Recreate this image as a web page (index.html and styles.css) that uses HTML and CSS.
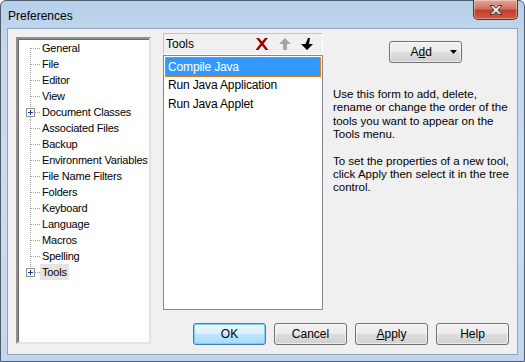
FILE: index.html
```html
<!DOCTYPE html>
<html>
<head>
<meta charset="utf-8">
<link rel="stylesheet" href="styles.css">
</head>
<body>
<div class="window">
  <div class="titlebar">
    <span class="title">Preferences</span>
    <div class="close">
      <svg width="18" height="12" viewBox="0 0 18 12">
        <path d="M3 1.5 L6 1.5 L9 4.3 L12 1.5 L15 1.5 L10.8 6 L15 10.5 L12 10.5 L9 7.7 L6 10.5 L3 10.5 L7.2 6 Z" fill="#ffffff" stroke="#3b3b3b" stroke-width="1" stroke-linejoin="round"/>
      </svg>
    </div>
  </div>
  <div class="client">
    <div class="tree">
      <div class="row"><svg class="conn" width="22" height="16"><line x1="12.5" y1="8" x2="12.5" y2="16" class="dl"/><line x1="13" y1="8.5" x2="22" y2="8.5" class="dl"/></svg><span class="lbl">General</span></div>
      <div class="row"><svg class="conn" width="22" height="16"><line x1="12.5" y1="0" x2="12.5" y2="16" class="dl"/><line x1="13" y1="8.5" x2="22" y2="8.5" class="dl"/></svg><span class="lbl">File</span></div>
      <div class="row"><svg class="conn" width="22" height="16"><line x1="12.5" y1="0" x2="12.5" y2="16" class="dl"/><line x1="13" y1="8.5" x2="22" y2="8.5" class="dl"/></svg><span class="lbl">Editor</span></div>
      <div class="row"><svg class="conn" width="22" height="16"><line x1="12.5" y1="0" x2="12.5" y2="16" class="dl"/><line x1="13" y1="8.5" x2="22" y2="8.5" class="dl"/></svg><span class="lbl">View</span></div>
      <div class="row"><svg class="conn" width="22" height="16"><line x1="12.5" y1="0" x2="12.5" y2="4" class="dl"/><line x1="12.5" y1="13" x2="12.5" y2="16" class="dl"/><line x1="17" y1="8.5" x2="22" y2="8.5" class="dl"/><rect x="8.5" y="4.5" width="8" height="8" class="pbox"/><line x1="10" y1="8.5" x2="15" y2="8.5" class="pl"/><line x1="12.5" y1="6" x2="12.5" y2="11" class="pl"/></svg><span class="lbl">Document Classes</span></div>
      <div class="row"><svg class="conn" width="22" height="16"><line x1="12.5" y1="0" x2="12.5" y2="16" class="dl"/><line x1="13" y1="8.5" x2="22" y2="8.5" class="dl"/></svg><span class="lbl">Associated Files</span></div>
      <div class="row"><svg class="conn" width="22" height="16"><line x1="12.5" y1="0" x2="12.5" y2="16" class="dl"/><line x1="13" y1="8.5" x2="22" y2="8.5" class="dl"/></svg><span class="lbl">Backup</span></div>
      <div class="row"><svg class="conn" width="22" height="16"><line x1="12.5" y1="0" x2="12.5" y2="16" class="dl"/><line x1="13" y1="8.5" x2="22" y2="8.5" class="dl"/></svg><span class="lbl">Environment Variables</span></div>
      <div class="row"><svg class="conn" width="22" height="16"><line x1="12.5" y1="0" x2="12.5" y2="16" class="dl"/><line x1="13" y1="8.5" x2="22" y2="8.5" class="dl"/></svg><span class="lbl">File Name Filters</span></div>
      <div class="row"><svg class="conn" width="22" height="16"><line x1="12.5" y1="0" x2="12.5" y2="16" class="dl"/><line x1="13" y1="8.5" x2="22" y2="8.5" class="dl"/></svg><span class="lbl">Folders</span></div>
      <div class="row"><svg class="conn" width="22" height="16"><line x1="12.5" y1="0" x2="12.5" y2="16" class="dl"/><line x1="13" y1="8.5" x2="22" y2="8.5" class="dl"/></svg><span class="lbl">Keyboard</span></div>
      <div class="row"><svg class="conn" width="22" height="16"><line x1="12.5" y1="0" x2="12.5" y2="16" class="dl"/><line x1="13" y1="8.5" x2="22" y2="8.5" class="dl"/></svg><span class="lbl">Language</span></div>
      <div class="row"><svg class="conn" width="22" height="16"><line x1="12.5" y1="0" x2="12.5" y2="16" class="dl"/><line x1="13" y1="8.5" x2="22" y2="8.5" class="dl"/></svg><span class="lbl">Macros</span></div>
      <div class="row"><svg class="conn" width="22" height="16"><line x1="12.5" y1="0" x2="12.5" y2="16" class="dl"/><line x1="13" y1="8.5" x2="22" y2="8.5" class="dl"/></svg><span class="lbl">Spelling</span></div>
      <div class="row"><svg class="conn" width="22" height="16"><line x1="12.5" y1="0" x2="12.5" y2="4" class="dl"/><line x1="17" y1="8.5" x2="22" y2="8.5" class="dl"/><rect x="8.5" y="4.5" width="8" height="8" class="pbox"/><line x1="10" y1="8.5" x2="15" y2="8.5" class="pl"/><line x1="12.5" y1="6" x2="12.5" y2="11" class="pl"/></svg><span class="lbl sel">Tools</span></div>
    </div>
    <div class="main">
      <div class="top">
        <div class="tools">
          <div class="tools-head">
            <span class="th-title">Tools</span>
            <span class="th-icons">
              <svg width="16" height="14" viewBox="0 0 16 14"><path d="M2 1 L5 1 L8 4.5 L11 1 L14 1 L9.6 6.5 L14.5 13 L11.5 13 L8 8.5 L4.5 13 L1.5 13 L6.4 6.5 Z" fill="#a00000"/></svg>
              <svg width="14" height="14" viewBox="0 0 14 14"><path d="M7 1 L13 7 L9 7 L9 13 L5 13 L5 7 L1 7 Z" fill="#a6a6a6"/></svg>
              <svg width="14" height="14" viewBox="0 0 14 14"><path d="M8 1 L10 1 L9 7 L13 7 L7 13 L1 7 L5.5 7 Z" fill="#000000"/></svg>
            </span>
          </div>
          <div class="tools-list">
            <div class="item selected">Compile Java</div>
            <div class="item">Run Java Application</div>
            <div class="item">Run Java Applet</div>
          </div>
        </div>
        <div class="info">
          <div class="add-wrap">
            <div class="btn add"><span>A<u>d</u>d</span><svg width="8" height="4" viewBox="0 0 8 4"><path d="M0 0 L7 0 L3.5 4 Z" fill="#000"/></svg></div>
          </div>
          <p class="para">Use this form to add, delete, rename or change the order of the tools you want to appear on the Tools menu.</p>
          <p class="para">To set the properties of a new tool, click Apply then select it in the tree control.</p>
        </div>
      </div>
      <div class="buttons">
        <div class="btn default">OK</div>
        <div class="btn">Cancel</div>
        <div class="btn"><span><u>A</u>pply</span></div>
        <div class="btn">Help</div>
      </div>
    </div>
  </div>
</div>
</body>
</html>
```

FILE: styles.css
```css
* { box-sizing: border-box; }
html, body {
  margin: 0;
  padding: 0;
  width: 525px;
  height: 362px;
  overflow: hidden;
  background: #ffffff;
}
.window {
  width: 525px;
  height: 362px;
  background: linear-gradient(180deg, #b6cfe9 0px, #c3d8ee 40px, #cadcf0 200px, #c2d7ed 362px);
  border: 1px solid #4f5c6c;
  border-radius: 6px 6px 0 0;
  display: flex;
  flex-direction: column;
  font-family: "Liberation Sans", Arial, sans-serif;
  font-size: 11px;
  color: #000;
}
.titlebar {
  height: 27px;
  display: flex;
  align-items: flex-start;
  justify-content: space-between;
  padding-left: 7px;
  padding-right: 6px;
}
.title {
  font-size: 12px;
  margin-top: 8px;
  color: #000;
}
.close {
  width: 45px;
  height: 20px;
  margin-top: -1px;
  border: 1px solid #6e2a22;
  border-top: none;
  border-radius: 0 0 5px 5px;
  background: linear-gradient(180deg, #e3a79c 0%, #d3705f 45%, #c0412b 55%, #d25a3f 100%);
  display: flex;
  align-items: center;
  justify-content: center;
  box-shadow: inset 0 0 0 1px rgba(255,255,255,0.35);
}
.client {
  flex: 1;
  margin: 0 6px 6px 6px;
  background: #f0f0f0;
  border: 1px solid #8ca5c3;
  display: flex;
  align-items: flex-start;
}
.tree {
  width: 135px;
  height: 307px;
  margin: 8px 0 0 8px;
  background: #fff;
  border-style: solid;
  border-width: 2px;
  border-color: #8f8f8f #e3e3e3 #e3e3e3 #8f8f8f;
  box-shadow: inset 1px 1px 0 #696969;
  padding-top: 1px;
}
.row {
  height: 16px;
  display: flex;
  align-items: center;
}
.conn {
  flex: none;
  width: 22px;
  height: 16px;
  display: block;
}
.dl {
  stroke: #a0a0a0;
  stroke-width: 1;
  stroke-dasharray: 1 1;
  shape-rendering: crispEdges;
}
.pbox {
  fill: #fbfbfb;
  stroke: #919191;
  stroke-width: 1;
  shape-rendering: crispEdges;
}
.pl {
  stroke: #1f3f83;
  stroke-width: 1;
  shape-rendering: crispEdges;
}
.lbl {
  padding: 1px 2px;
  line-height: 14px;
  white-space: nowrap;
  letter-spacing: -0.2px;
}
.lbl.sel {
  background: #e4e4e4;
}
.main {
  margin-left: 12px;
  margin-top: 4px;
  flex: 1;
  display: flex;
  flex-direction: column;
}
.top {
  display: flex;
  align-items: flex-start;
}
.tools {
  width: 160px;
  height: 277px;
  display: flex;
  flex-direction: column;
}
.tools-head {
  height: 22px;
  border: 1px solid #c5c5c5;
  border-right-color: #ffffff;
  border-bottom-color: #ffffff;
  display: flex;
  align-items: center;
  justify-content: space-between;
  padding: 0 8px 0 2px;
}
.th-title {
  font-size: 12px;
}
.th-icons {
  display: flex;
  gap: 8px;
  align-items: center;
}
.th-icons svg { display: block; }
.tools-list {
  flex: 1;
  background: #fff;
  border: 1px solid #828790;
  padding: 1px;
}
.item {
  height: 19px;
  line-height: 19px;
  padding-left: 3px;
  font-size: 12px;
  white-space: nowrap;
  letter-spacing: -0.15px;
}
.item.selected {
  background: #3399ff;
  color: #fff;
  outline: 1px dotted #e48a2c;
  outline-offset: -1px;
  height: 20px;
  line-height: 20px;
  margin-bottom: -1px;
}
.info {
  margin-left: 10px;
  flex: 1;
  display: flex;
  flex-direction: column;
}
.add-wrap {
  display: flex;
  justify-content: center;
  padding-top: 8px;
  padding-right: 0px;
}
.btn {
  width: 73px;
  height: 22px;
  border: 1px solid #707070;
  border-radius: 3px;
  background: linear-gradient(180deg, #f2f2f2 0%, #ebebeb 48%, #dddddd 52%, #cfcfcf 100%);
  box-shadow: inset 0 0 0 1px rgba(255,255,255,0.6);
  display: flex;
  align-items: center;
  justify-content: center;
  font-size: 12px;
}
.btn.add {
  justify-content: flex-start;
  padding-left: 21px;
}
.btn.add svg {
  margin-left: 18px;
}
.btn.default {
  border-color: #3c7fb1;
  background: linear-gradient(180deg, #eaf6fd 0%, #d9f0fc 48%, #bee6fd 52%, #a7d9f5 100%);
  box-shadow: inset 0 0 0 1px #7ed0f4;
}
.para {
  margin: 0;
  line-height: 13.3px;
  font-size: 11.5px;
  white-space: normal;
}
.para:first-of-type { margin-top: 25px; }
.para + .para { margin-top: 13.5px; }
.buttons {
  display: flex;
  justify-content: flex-end;
  gap: 8px;
  padding-right: 8px;
  margin-top: 13px;
}
```
